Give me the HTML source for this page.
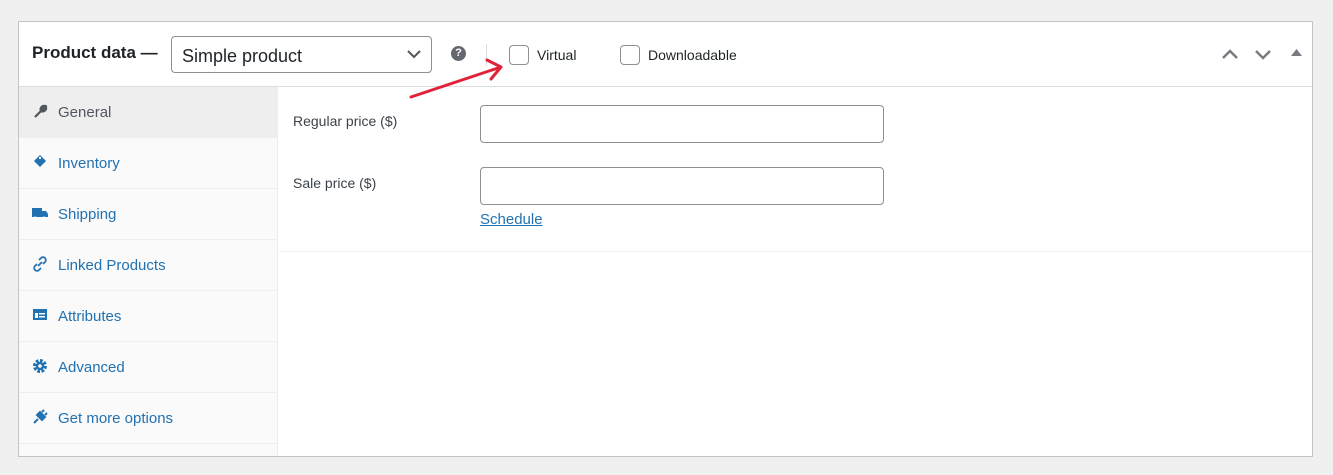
<!DOCTYPE html>
<html><head><style>
*{box-sizing:border-box;margin:0;padding:0}
body{width:1333px;height:475px;background:#f0f0f1;font-family:"Liberation Sans",sans-serif;position:relative;overflow:hidden}
.panel{position:absolute;left:18px;top:21px;width:1295px;height:436px;background:#fff;border:1px solid #c3c4c7}
.hdr{position:absolute;left:0;top:0;width:100%;height:65px;border-bottom:1px solid #dcdcde}
.abs{position:absolute}
.side{position:absolute;left:0;top:65px;width:259px;height:369px;background:#fafafa;border-right:1px solid #eee}
.item{height:51px;border-bottom:1px solid #eee;color:#2271b1;font-size:15px;padding-left:39px;padding-top:1px;line-height:50px;position:relative}
.item.act{background:#eee;color:#50575e}
.ic{position:absolute;left:13px;top:16px;width:16px;height:16px}
.lbl{font-size:14px;color:#3c434a}
.inp{position:absolute;width:404px;height:38px;border:1px solid #8c8f94;border-radius:4px;background:#fff}
.cb{position:absolute;width:20px;height:20px;border:1px solid #8c8f94;border-radius:4px;background:#fff}
</style></head><body>
<div class="panel">
 <div class="hdr">
  <div class="abs" style="left:13px;top:21px;font-size:17px;font-weight:bold;color:#1d2327">Product data —</div>
  <div class="abs" style="left:152px;top:14px;width:261px;height:37px;border:1px solid #8c8f94;border-radius:4px;font-size:18px;color:#1d2327;padding:9px 10px">Simple product
   <svg class="abs" style="right:10px;top:13px" width="14" height="9" viewBox="0 0 14 9"><path d="M1 1l6 6 6-6" fill="none" stroke="#50575e" stroke-width="2"/></svg></div>
  <div class="abs" style="left:432px;top:24px;width:15px;height:15px;border-radius:50%;background:#646970;color:#fff;font-size:11px;font-weight:bold;text-align:center;line-height:15px">?</div>
  <div class="abs" style="left:467px;top:22px;width:1px;height:22px;background:#dcdcde"></div>
  <div class="cb" style="left:490px;top:23px"></div>
  <div class="abs" style="left:518px;top:25px;font-size:14px;color:#1d2327">Virtual</div>
  <div class="cb" style="left:601px;top:23px"></div>
  <div class="abs" style="left:629px;top:25px;font-size:14px;color:#1d2327">Downloadable</div>
  <svg class="abs" style="left:1202px;top:27px" width="18" height="11"><path d="M2 9l7-7 7 7" fill="none" stroke="#787c82" stroke-width="2.5"/></svg>
  <svg class="abs" style="left:1235px;top:27px" width="18" height="11"><path d="M2 2l7 7 7-7" fill="none" stroke="#787c82" stroke-width="2.5"/></svg>
  <svg class="abs" style="left:1272px;top:26px" width="11" height="9"><path d="M0 8L5.5 1 11 8z" fill="#787c82"/></svg>
 </div>
 <svg class="abs" style="left:380px;top:30px" width="110" height="50"><path d="M12 45L102 15M88 8l14 7-10 12" fill="none" stroke="#e0213a" stroke-width="3" stroke-linecap="round" stroke-linejoin="round"/></svg>
 <div class="side">
  <div class="item act"><svg class="ic" viewBox="0 0 16 16"><path d="M3 14l6-6M9 8a3.5 3.5 0 0 1 4-5l-2 2 1 1 2-2a3.5 3.5 0 0 1-5 4" stroke="#50575e" stroke-width="2.2" fill="#50575e"/></svg>General</div>
  <div class="item"><svg class="ic" viewBox="0 0 16 16"><path d="M8 1l6 6-6 6-6-6z" fill="#2271b1"/><circle cx="8" cy="4" r="1.2" fill="#fff"/></svg>Inventory</div>
  <div class="item"><svg class="ic" viewBox="0 0 16 16"><path d="M0 3h10v9H0zM10 6h4l2 3v3h-6z" fill="#2271b1"/><circle cx="3" cy="13" r="1.5" fill="#fff"/><circle cx="12" cy="13" r="1.5" fill="#fff"/></svg>Shipping</div>
  <div class="item"><svg class="ic" viewBox="0 0 16 16"><path d="M6 10l4-4M7 4l2-2a2.5 2.5 0 0 1 4 4l-2 2M9 12l-2 2a2.5 2.5 0 0 1-4-4l2-2" fill="none" stroke="#2271b1" stroke-width="1.8"/></svg>Linked Products</div>
  <div class="item"><svg class="ic" viewBox="0 0 16 16"><rect x="1" y="2" width="14" height="11" fill="#2271b1"/><rect x="3" y="6" width="3" height="5" fill="#fff"/><rect x="7" y="6" width="6" height="1.5" fill="#fff"/><rect x="7" y="9" width="6" height="1.5" fill="#fff"/></svg>Attributes</div>
  <div class="item"><svg class="ic" viewBox="0 0 16 16"><circle cx="8" cy="8" r="5" fill="none" stroke="#2271b1" stroke-width="4" stroke-dasharray="2.5 1.4"/><circle cx="8" cy="8" r="4.2" fill="#2271b1"/><circle cx="8" cy="8" r="1.8" fill="#fafafa"/></svg>Advanced</div>
  <div class="item"><svg class="ic" viewBox="0 0 16 16"><path d="M2 14l4-4M5 6l5 5 3-3-5-5zM10 3l2-2M13 6l2-2" stroke="#2271b1" stroke-width="2" fill="#2271b1"/></svg>Get more options</div>
 </div>
 <div class="abs" style="left:260px;top:66px;width:1033px;height:164px;border-bottom:1px solid #eee"></div>
 <div class="abs lbl" style="left:274px;top:91px">Regular price ($)</div>
 <div class="inp" style="left:461px;top:83px"></div>
 <div class="abs lbl" style="left:274px;top:153px">Sale price ($)</div>
 <div class="inp" style="left:461px;top:145px"></div>
 <div class="abs" style="left:461px;top:189px;font-size:15px;color:#2271b1;text-decoration:underline">Schedule</div>
</div>
</body></html>
